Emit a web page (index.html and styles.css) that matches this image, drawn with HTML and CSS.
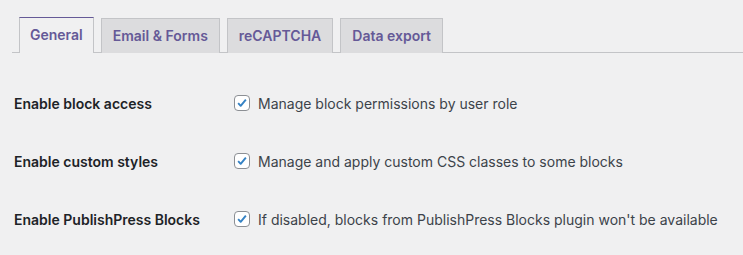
FILE: index.html
```html
<!DOCTYPE html>
<html>
<head>
  <meta charset="UTF-8" />
  <title>Settings</title>
  <link rel="stylesheet" href="styles.css">
</head>
<body>
  <div class="wrap">
    <nav class="nav-tab-wrapper">
      <a class="nav-tab nav-tab-active">General</a>
      <a class="nav-tab">Email &amp; Forms</a>
      <a class="nav-tab">reCAPTCHA</a>
      <a class="nav-tab">Data export</a>
    </nav>

    <div class="form-table">
      <div class="form-row">
        <div class="form-label">Enable block access</div>
        <label class="form-field">
          <span class="checkbox"><svg viewBox="0 0 16 16" width="16" height="16"><path d="M3.6 8.2l2.9 3 5.9-7.1" fill="none" stroke="#3582c4" stroke-width="2.2" stroke-linejoin="round"/></svg></span>
          Manage block permissions by user role
        </label>
      </div>
      <div class="form-row">
        <div class="form-label">Enable custom styles</div>
        <label class="form-field">
          <span class="checkbox"><svg viewBox="0 0 16 16" width="16" height="16"><path d="M3.6 8.2l2.9 3 5.9-7.1" fill="none" stroke="#3582c4" stroke-width="2.2" stroke-linejoin="round"/></svg></span>
          Manage and apply custom CSS classes to some blocks
        </label>
      </div>
      <div class="form-row">
        <div class="form-label">Enable PublishPress Blocks</div>
        <label class="form-field">
          <span class="checkbox"><svg viewBox="0 0 16 16" width="16" height="16"><path d="M3.6 8.2l2.9 3 5.9-7.1" fill="none" stroke="#3582c4" stroke-width="2.2" stroke-linejoin="round"/></svg></span>
          If disabled, blocks from PublishPress Blocks plugin won't be available
        </label>
      </div>
    </div>
  </div>
</body>
</html>
```

FILE: styles.css
```css
body {
  margin: 0;
  background: #f0f0f1;
  color: #1d2327;
  font-family: Inter, "Noto Sans", sans-serif;
  font-size: 14px;
}
.wrap {
  padding: 17px 0 0 12px;
}
.nav-tab-wrapper {
  display: flex;
  align-items: flex-end;
  gap: 7px;
  padding-left: 7px;
  border-bottom: 1px solid #c3c4c7;
}
.nav-tab {
  display: block;
  height: 34px;
  line-height: 34px;
  padding: 0 11px;
  margin-bottom: -1px;
  background: #dcdcde;
  border: 1px solid #c3c4c7;
  border-bottom: none;
  color: #655997;
  font-size: 14px;
  font-weight: 600;
  box-sizing: content-box;
}
.nav-tab-active {
  background: #f0f0f1;
  border-top-color: #655997;
  height: 35px;
  padding: 0 10px;
}
.form-table {
  padding: 21px 0 0 2px;
  display: flex;
  flex-direction: column;
}
.form-row {
  display: flex;
  align-items: center;
  height: 58px;
}
.form-label {
  width: 220px;
  font-weight: 600;
  color: #1d2327;
}
.form-field {
  display: flex;
  align-items: center;
  gap: 8px;
  color: #3c434a;
}
.checkbox {
  width: 14px;
  height: 14px;
  border: 1px solid #8c8f94;
  border-radius: 4px;
  background: #fff;
  display: flex;
  align-items: center;
  justify-content: center;
}
.checkbox svg {
  width: 14px;
  height: 14px;
}
```
